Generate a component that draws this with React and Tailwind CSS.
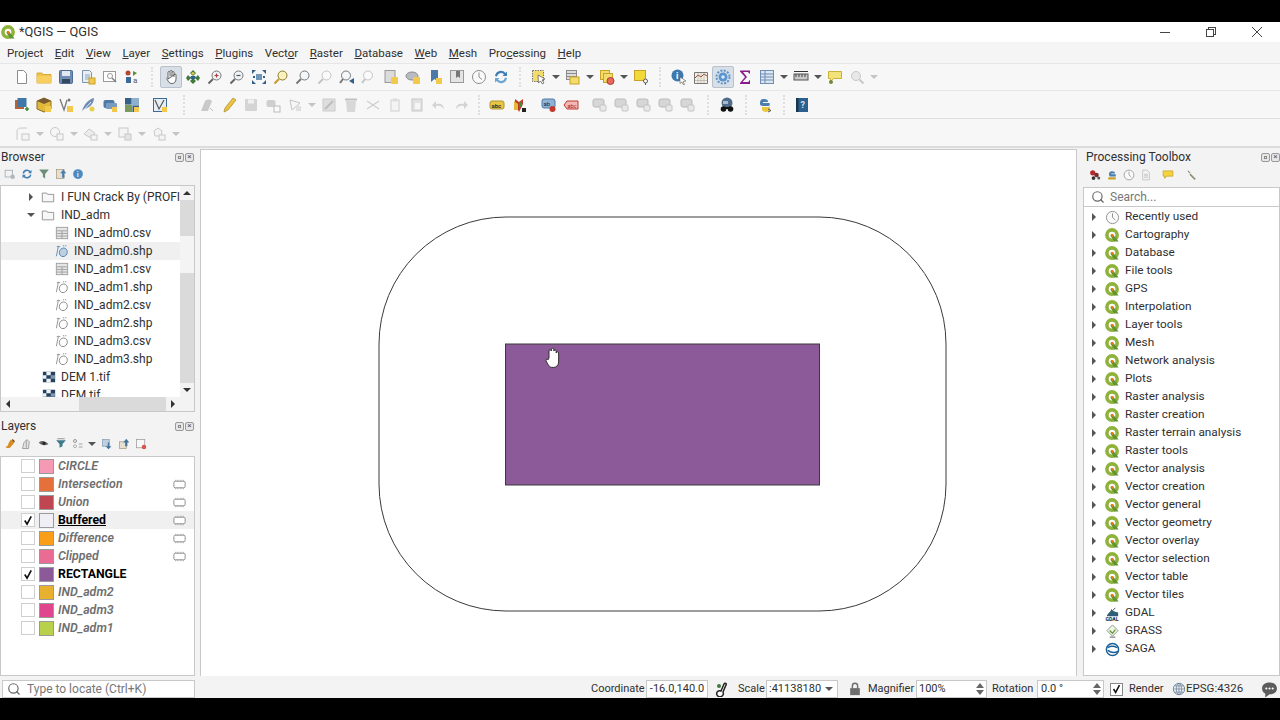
import React from 'react';
import { Search } from 'lucide-react';

const g = { fill: 'none', stroke: '#9a9a9a' };

// small toolbar drawings, all on a 16 unit grid
const shapes = {
  new: <path d="M3.5 1.5h6l3 3v10h-9z" fill="#fff" stroke="#8c8c8c" />,
  open: <><path d="M1 4h5l1 1.5h8V14H1z" fill="#f0c24b" stroke="#d9a93a" /><rect x="1" y="7" width="14" height="7" fill="#f6cf60" /></>,
  save: <><rect x="1.5" y="1.5" width="13" height="13" rx="1" fill="#6f8db5" stroke="#4f6a90" /><rect x="4" y="2" width="8" height="5" fill="#dfe7f0" /><rect x="4" y="10" width="8" height="4" fill="#34495f" /></>,
  saveas: <><path d="M2.5 1.5h7l2 2v10h-9z" fill="#e8eef4" stroke="#7d93ad" /><rect x="5" y="5" width="5" height="6" fill="#b9c9d8" /><rect x="9" y="9" width="6" height="6" fill="#f2c94c" stroke="#c9a227" /></>,
  print: <><rect x="1.5" y="2.5" width="12" height="10" fill="#fff" stroke="#9a9a9a" /><circle cx="8" cy="7" r="2.5" {...g} /><path d="M10 9l4 4" stroke="#7d7d7d" strokeWidth="1.5" /></>,
  style: <><circle cx="4" cy="4" r="2.5" fill="#b5472f" /><path d="M9 2l4 2-4 3z" fill="#5b8e3a" /><rect x="2" y="8" width="5" height="6" fill="#3d6a94" /><text x="9" y="14" fontSize="8" fill="#555">a</text></>,
  hand: <path d="M5 8V3.5a1 1 0 012 0V7m0-4.500a1 1 0 012 0V7m0-3.500a1 1 0 012 0V8m0-2a1 1 0 012 0v4c0 3-2 4.500-4 4.500-3 0-3.500-1.500-5-4.500-.6-1.200.8-2 1.600-1L5 10z" fill="#fff" stroke="#444" strokeWidth=".8" />,
  pan: <><path d="M8 1l3 3-3 3-3-3zM3 6l3 3-3 3-2-3zM13 6l2 3-2 3-3-3zM8 9l3 3-3 3-3-3z" fill="#3f7a3a" /><path d="M8 3l2 1-2 2-2-2z" fill="#e7cf4a" /><path d="M6 7l4 0 1 2-3 2-3-2z" fill="#2f5f88" /></>,
  zoomin: <><circle cx="9.500" cy="6.500" r="4.500" fill="#eef3f8" stroke="#777" /><path d="M6 10l-4.500 4.500" stroke="#666" strokeWidth="2" /><path d="M7.500 6.500h4M9.500 4.500v4" stroke="#b03a3a" strokeWidth="1.200" /></>,
  zoomout: <><circle cx="9.500" cy="6.500" r="4.500" fill="#eef3f8" stroke="#777" /><path d="M6 10l-4.500 4.500" stroke="#666" strokeWidth="2" /><path d="M7.500 6.500h4" stroke="#555" strokeWidth="1.200" /></>,
  full: <><path d="M1 1h4L1 5zM15 1v4l-4-4zM1 15v-4l4 4zM15 15h-4l4-4z" fill="#35608a" /><rect x="5" y="5" width="6" height="6" fill="#6f97ba" /><path d="M2 8h2M12 8h2" stroke="#35608a" strokeWidth="2" /></>,
  zoomsel: <><circle cx="9.500" cy="6.500" r="4.500" fill="#fbf0c0" stroke="#8a7a2e" /><path d="M6 10l-4.500 4.500" stroke="#c79a2a" strokeWidth="2" /></>,
  zoomlayer: <><circle cx="9.500" cy="6.500" r="4.500" fill="#f4f7fa" stroke="#777" /><path d="M6 10l-4.500 4.500" stroke="#777" strokeWidth="2" /></>,
  zoomoff: <><circle cx="9.500" cy="6.500" r="4.500" fill="#fafafa" stroke="#c4c4c4" /><path d="M6 10l-4.500 4.500" stroke="#c4c4c4" strokeWidth="2" /></>,
  zoomlast: <><circle cx="7" cy="6.500" r="4.500" fill="#f4f7fa" stroke="#777" /><path d="M4 10l-3 4" stroke="#777" strokeWidth="2" /><path d="M15 9v6l-5-3z" fill="#35608a" /></>,
  zoomnext: <><circle cx="7" cy="6.500" r="4.500" fill="#fafafa" stroke="#c4c4c4" /><path d="M4 10l-3 4" stroke="#c4c4c4" strokeWidth="2" /></>,
  newmap: <><rect x="2" y="1.500" width="10" height="12" fill="#dbdbdb" stroke="#9a9a9a" /><rect x="8" y="8" width="7" height="7" rx="1" fill="#f2c94c" /></>,
  theme: <><ellipse cx="7" cy="7" rx="6" ry="4" fill="#b8bcc2" stroke="#8a8a8a" /><rect x="8" y="8" width="7" height="7" rx="1" fill="#f2c94c" /></>,
  bookmark: <><path d="M4 1h7v12l-3.500-3L4 13z" fill="#4d79a8" /><rect x="9" y="9" width="6" height="6" fill="#f2c94c" /></>,
  bookmarks: <><rect x="1.500" y="1.500" width="13" height="12" fill="#e4e4e4" stroke="#9a9a9a" /><path d="M7 2h4v7L9 7.500 7 9z" fill="#777" /></>,
  clock: <><circle cx="8" cy="8" r="6.500" fill="#fafafa" stroke="#8d8d8d" /><path d="M8 3.500V8l3 2.500" fill="none" stroke="#8d8d8d" /></>,
  refresh: <><path d="M2 7a6 6 0 0110.500-3L14 2.500V7H9.500l1.500-1.500A4 4 0 004 7.500z" fill="#3f7fb5" /><path d="M14 9A6 6 0 013.500 12L2 13.500V9h4.500L5 10.500A4 4 0 0012 8.500z" fill="#6aa6d4" /></>,
  select: <><rect x="1.500" y="1.500" width="11" height="11" fill="#f2dc6b" stroke="#777" strokeDasharray="1.500 1" /><path d="M7 6l7 4-3 1 2 3-1.500 1-2-3-2 2z" fill="#fff" stroke="#555" strokeWidth=".7" /></>,
  attr: <><rect x="1.500" y="1.500" width="10" height="9" fill="#dcdcdc" stroke="#8c8c8c" /><path d="M2 4.500h9M2 7.500h9" stroke="#8c8c8c" /><rect x="5" y="8" width="9" height="7" fill="#f2dc6b" stroke="#c9a227" /></>,
  deselect: <><rect x="1.500" y="1.500" width="9" height="9" fill="#f2dc6b" stroke="#c9a227" /><rect x="4.500" y="4.500" width="9" height="9" fill="#f2dc6b" stroke="#c9a227" /><circle cx="11.500" cy="12" r="3.500" fill="#e56a5a" stroke="#b03a3a" /></>,
  selloc: <><rect x="1.500" y="1.500" width="11" height="10" fill="#f2d93a" stroke="#c9a227" /><circle cx="12.500" cy="12" r="2" fill="#fff" stroke="#555" /><path d="M12.500 14v2" stroke="#555" /></>,
  identify: <><circle cx="6.500" cy="6.500" r="6" fill="#3f78ad" /><text x="5" y="10" fontSize="9" fontWeight="700" fill="#fff">i</text><path d="M9 8l6 4-3 .5 1.500 3-1 .5-1.500-3-2 1.500z" fill="#fff" stroke="#555" strokeWidth=".6" /></>,
  stats: <><path d="M1.500 3.500h13v11h-13z" fill="#f3eee0" stroke="#777" /><path d="M2 9l3-3 3 2 3-3 3 2" fill="none" stroke="#9c4a3a" /><path d="M2 11.500h12M5 4v10M8 4v10M11 4v10" stroke="#999" strokeWidth=".5" /></>,
  gear: <><circle cx="8" cy="8" r="4.500" fill="#5b95cf" /><circle cx="8" cy="8" r="6.500" fill="none" stroke="#5b95cf" strokeWidth="2" strokeDasharray="2 1.400" /><circle cx="8" cy="8" r="1.800" fill="#dbe7f2" /></>,
  sigma: <path d="M3 1.500h10v3h-1.200l-.6-1.500H6l4 5-4.500 5h6l.8-1.800H13V15H3v-1l5-6-5-5.500z" fill="#8a1c8a" />,
  table: <><rect x="1.500" y="1.500" width="13" height="13" fill="#dbe6f0" stroke="#6f8db5" /><path d="M2 5h12M2 8h12M2 11h12M6 2v12" stroke="#6f8db5" /></>,
  measure: <><rect x="1" y="5" width="14" height="6" fill="#c9c9c9" stroke="#555" /><path d="M3 5v3M6 5v3M9 5v3M12 5v3" stroke="#444" /><path d="M1 2.500h14" stroke="#333" /></>,
  tip: <><path d="M1.500 2.500h13v7h-8l-3 3v-3h-2z" fill="#f3e27a" stroke="#c9b23a" /><circle cx="4" cy="13" r="2" fill="#6f8b3a" /></>,
  findoff: <><circle cx="7" cy="7" r="4.500" fill="#e8e8e8" stroke="#c8c8c8" /><path d="M10.500 10.500l4 4" stroke="#c8c8c8" strokeWidth="2" /></>,
  dsm: <><rect x="1" y="3" width="9" height="9" fill="#b5633a" /><rect x="3.500" y="1" width="9" height="9" fill="#3f78ad" /><path d="M11 12h4M13 10v4" stroke="#3f8f3a" strokeWidth="1.600" /></>,
  gpkg: <><path d="M8 1l7 3v8l-7 3-7-3V4z" fill="#e0b93a" stroke="#8a6d20" /><path d="M1 4l7 3 7-3-7-3z" fill="#7a5a30" /><rect x="9" y="9" width="6" height="6" fill="#f2c94c" /></>,
  vnew: <><path d="M2 2l4 11 3-10" fill="none" stroke="#777" strokeWidth="1.300" /><circle cx="11" cy="3" r="1.500" fill="#777" /><rect x="9" y="9" width="6" height="6" fill="#f2c94c" /></>,
  feather: <><path d="M2 14C4 7 9 2 14 1c0 5-4 10-10 11z" fill="#6f8db5" /><path d="M2 15L11 5" stroke="#e8eef4" /><circle cx="12" cy="12" r="2.500" fill="#e7cf4a" /></>,
  vrt: <><rect x="1.500" y="3" width="11" height="8" rx="2" fill="#4f7aa8" /><rect x="4" y="6" width="11" height="6" rx="1" fill="#7c9cbf" /><rect x="10" y="10" width="5" height="5" fill="#f2c94c" /></>,
  raster: <><rect x="1" y="1" width="14" height="14" fill="#35608a" /><path d="M1 8h14M8 1v14" stroke="#cfd8e0" /><path d="M8 1h7v7H8z" fill="#8db0cc" /><path d="M1 8h7v7H1z" fill="#7a9a5a" /><rect x="10" y="10" width="5" height="5" fill="#f2c94c" /></>,
  mesh: <><rect x="1.500" y="1.500" width="13" height="13" fill="#e7eef5" stroke="#3f6a94" /><path d="M3 3l4 9 5-9" fill="none" stroke="#555" strokeWidth="1.200" /><rect x="10" y="10" width="5" height="5" fill="#f2c94c" /></>,
  editoff: <><path d="M2 14L6 4c2-2 5-2 7 0L9 14z" fill="#c9c9c9" /><path d="M11 11l3 3" stroke="#bbb" /></>,
  pencil: <><path d="M3 15l1-4 8-10 3 2-8 10z" fill="#ecc23e" stroke="#a88a2a" strokeWidth=".7" /></>,
  saveoff: <><rect x="2" y="2" width="12" height="12" rx="1" fill="#d4d4d4" /><rect x="5" y="2.500" width="6" height="4" fill="#f0f0f0" /></>,
  addoff: <><rect x="1.500" y="3" width="9" height="7" rx="2" fill="#cfcfcf" /><rect x="9" y="9" width="6" height="6" fill="#fafafa" stroke="#bbb" /></>,
  nodeoff: <><path d="M3 3l10 3-8 7z" fill="none" stroke="#c4c4c4" /><rect x="9" y="9" width="5" height="5" fill="#e0e0e0" /></>,
  modoff: <><rect x="2" y="2" width="12" height="12" fill="#dedede" stroke="#ccc" /><path d="M4 12L12 4" stroke="#bdbdbd" strokeWidth="2" /></>,
  trashoff: <><path d="M3 4h10l-1 11H4z" fill="#d8d8d8" /><path d="M2 2.500h12" stroke="#c0c0c0" strokeWidth="2" /></>,
  cutoff: <path d="M2 4l12 8M2 12l12-8" fill="none" stroke="#cfcfcf" strokeWidth="1.400" />,
  copyoff: <><rect x="4" y="3" width="8" height="11" fill="#f4f4f4" stroke="#cfcfcf" /><rect x="6" y="1.500" width="4" height="3" fill="#dcdcdc" /></>,
  pasteoff: <><rect x="3" y="2" width="10" height="12" fill="#e2e2e2" stroke="#c8c8c8" /><rect x="6" y="6" width="5" height="6" fill="#f6f6f6" /></>,
  undooff: <path d="M13 12c0-5-4-6-8-5V4L1 8l4 4V9c3-1 6 0 8 3z" fill="#d4d4d4" />,
  redooff: <path d="M3 12c0-5 4-6 8-5V4l4 4-4 4V9c-3-1-6 0-8 3z" fill="#d4d4d4" />,
  abc: <><rect x="1" y="4" width="14" height="8" rx="2" fill="#e8c547" stroke="#b3942a" /><text x="2.500" y="10.500" fontSize="6" fontWeight="700" fill="#333">abc</text></>,
  diagram: <><path d="M4 2l4 3 4-3v5l-4 8-4-8z" fill="#c0392b" /><path d="M3 4l4 3v6H3z" fill="#e3b93a" /><path d="M8 6l3-2v6H8z" fill="#3f8f3a" /><rect x="11" y="11" width="4" height="4" fill="#222" /></>,
  ablabel: <><rect x="1" y="2" width="13" height="9" rx="2" fill="#8fb3d4" stroke="#4f7aa8" /><text x="2.500" y="9" fontSize="6" fill="#223">ab</text><circle cx="11.500" cy="12" r="3" fill="#c0392b" /></>,
  abcred: <><path d="M1 8l3-4h11v8H4z" fill="#f2b8b8" stroke="#c0392b" /><text x="4.500" y="10.500" fontSize="5.500" fill="#a02020">abc</text></>,
  lbloff: <><rect x="1" y="2" width="11" height="8" rx="2" fill="#d6d6d6" stroke="#bbb" /><rect x="8" y="8" width="6" height="6" rx="1" fill="#e8e8e8" stroke="#c4c4c4" /></>,
  binoc: <><circle cx="8" cy="6" r="5.500" fill="#4f6d8a" /><path d="M4 4h5v3H4z" fill="#a9b9c6" /><circle cx="4.500" cy="12" r="2.800" fill="#111" /><circle cx="11.500" cy="12" r="2.800" fill="#111" /><rect x="6" y="10" width="4" height="2" fill="#111" /></>,
  python: <><path d="M3 7c0-4 1-5 4-5s4 1 4 3H6v1h6c1 0 1 2 0 3H6c-2 0-3-1-3-2z" fill="#4a7fb0" /><path d="M5 10h6c1 0 2-.5 2-1v2c0 3-2 4-4 4s-4-1-4-3z" fill="#edc73d" /><path d="M11 12l3 1.500-3 1.500" fill="none" stroke="#555" /></>,
  help: <><rect x="2" y="1" width="12" height="14" fill="#2b5f8c" /><rect x="2" y="1" width="2.500" height="14" fill="#18364f" /><text x="6.500" y="11" fontSize="9" fontWeight="700" fill="#cfe0ee">?</text></>,
  t3a: <><path d="M2 14V5c0-2 2-3 4-3h6" fill="none" stroke="#c8c8c8" /><rect x="7" y="8" width="7" height="6" fill="#f4f4f4" stroke="#c8c8c8" /></>,
  t3b: <><circle cx="6" cy="6" r="4.500" fill="#f6f6f6" stroke="#c8c8c8" /><rect x="8" y="8" width="6" height="6" fill="#f4f4f4" stroke="#c8c8c8" /></>,
  t3c: <><path d="M1 8l5-5 6 4-4 5z" fill="#ececec" stroke="#c8c8c8" /><rect x="8" y="9" width="6" height="5" fill="#f4f4f4" stroke="#c8c8c8" /></>,
  t3d: <><rect x="2" y="2" width="9" height="9" fill="#f4f4f4" stroke="#c8c8c8" /><rect x="8" y="8" width="6" height="6" fill="#e4e4e4" stroke="#c8c8c8" /></>,
  t3e: <><path d="M3 5l4-3 4 3-1 5H4z" fill="#f4f4f4" stroke="#c8c8c8" /><rect x="8" y="9" width="6" height="5" fill="#f4f4f4" stroke="#c8c8c8" /></>,
  enable: <><rect x="1.500" y="3" width="10" height="9" fill="#f2f2f2" stroke="#9aa5b0" /><circle cx="11.500" cy="11.500" r="3" fill="#b3b7bb" /></>,
  refreshs: <path d="M2 7a6 6 0 0110.500-3L14 2.500V7H9.500l1.500-1.500A4 4 0 004 7.500zM14 9A6 6 0 013.500 12L2 13.500V9h4.500L5 10.500A4 4 0 0012 8.500z" fill="#3f7fb5" />,
  filter: <path d="M1.500 2h13L9.500 8v6l-3-2V8z" fill="#6d8f7a" />,
  upfile: <><rect x="2" y="2" width="10" height="12" fill="#e7dfcf" stroke="#a89a80" /><path d="M11 2l4 5h-2.500v6h-3V7H7z" fill="#4a7fb0" /></>,
  info: <><circle cx="8" cy="8" r="6.500" fill="#4a8bc2" /><text x="6.400" y="12" fontSize="10" fontWeight="700" fill="#dce9f4">i</text></>,
  brush: <><path d="M9 2l5 4-6 7c-3 1-5 0-6-1 3-1 4-3 4-5z" fill="#d98c26" /><path d="M11 2l3 3" stroke="#7a4a10" strokeWidth="2" /></>,
  manage: <><path d="M2 14l2-8 4-4 3 3-1 9z" fill="#e4e4e4" stroke="#8a8a8a" /><path d="M7 3v10" stroke="#8a8a8a" /></>,
  eye: <><path d="M1 6c3-3 8-3 13 2-5 3-10 2-13-2z" fill="#666" /><circle cx="8" cy="7" r="2" fill="#222" /></>,
  filterl: <><path d="M1.500 3h13L10 8v3l-4 2V8z" fill="#3f7a8a" /><path d="M3 1h10" stroke="#777" /></>,
  expr: <><circle cx="4" cy="4" r="2" fill="none" stroke="#777" /><circle cx="4" cy="11" r="2" fill="none" stroke="#999" /><path d="M9 8h5M9 12h5" stroke="#888" /></>,
  down: <><rect x="2" y="2" width="9" height="9" fill="#bcd0e2" stroke="#8a9fb2" /><path d="M9 6v5h-3l4 4 4-4h-3V6z" fill="#46739c" /></>,
  up: <><rect x="2" y="5" width="9" height="9" fill="#e7dfcf" stroke="#a89a80" /><path d="M11 1l4 5h-2.500v5h-3V6H7z" fill="#46739c" /></>,
  remove: <><rect x="2" y="2" width="11" height="11" fill="#f8f8f8" stroke="#9a9a9a" /><circle cx="12" cy="12" r="3" fill="#d9534f" /></>,
  models: <><circle cx="5" cy="5" r="3.500" fill="#b5282e" /><circle cx="10" cy="8" r="3" fill="#7a2a2a" /><circle cx="6" cy="12" r="2.500" fill="#333" /><circle cx="13" cy="12" r="2" fill="#555" /></>,
  script: <><path d="M4 8c0-4 1-5 4-5s4 1 4 3H7v1h6v3H5z" fill="#4a7fb0" /><path d="M3 11h10v3H3z" fill="#c9a227" /></>,
  doc: <><path d="M3.500 1.500h6l3 3v10h-9z" fill="#f2f2f2" stroke="#bcbcbc" /><path d="M5.500 7h5M5.500 9h5M5.500 11h5" stroke="#bcbcbc" /></>,
  tag: <><path d="M1.500 2.500h13v7h-8l-3 3v-3h-2z" fill="#f3d33e" stroke="#c9a227" /></>,
  wrench: <path d="M3 2l3 3-1 1-3-3zM6 6l7 7-1.500 1.500-7-7z" fill="#8a8f76" />,
  csv: <><rect x="1.500" y="1.500" width="13" height="13" fill="#e6e6e6" stroke="#9a9a9a" /><path d="M2 5.500h12M2 8.500h12M2 11.500h12M8 5.500v9" stroke="#9a9a9a" /></>,
  shp: <><path d="M4 2L1.500 14" stroke="#8a8a8a" fill="none" /><path d="M2 3h4M9 2h5" stroke="#8a8a8a" strokeDasharray="1.500 1" /><ellipse cx="9.500" cy="9.500" rx="4.500" ry="5" transform="rotate(25 9.500 9.500)" fill="none" stroke="#8a8a8a" /></>,
  shpsel: <><path d="M4 2L1.500 14" stroke="#5a86b0" fill="none" /><path d="M2 3h4M9 2h5" stroke="#5a86b0" strokeDasharray="1.500 1" /><ellipse cx="9.500" cy="9.500" rx="4.500" ry="5" transform="rotate(25 9.500 9.500)" fill="#bcd0e2" stroke="#5a86b0" /></>,
  tif: <><rect x="1" y="2" width="14" height="12" fill="#24415f" /><rect x="5" y="2" width="5" height="4" fill="#eef2f6" /><rect x="1" y="6" width="4" height="4" fill="#eef2f6" /><rect x="10" y="6" width="5" height="4" fill="#7f97ad" /><rect x="5" y="10" width="5" height="4" fill="#eef2f6" /></>,
  folder: <path d="M1.500 3.500h5l1 1.500h7v8.500h-13z" fill="#f7f7f7" stroke="#8c8c8c" />,
  qgis: <><circle cx="7.500" cy="7.500" r="5.500" fill="none" stroke="#8fb23a" strokeWidth="3.800" /><path d="M5.500 8l3-1 6 7.500h-4.500z" fill="#5f9430" /><path d="M6 6.500l2.500 0 1 2-2 1z" fill="#ee7913" /></>,
  gdal: <><path d="M2 11c1-4 4-4 5-8 1 3 4 3 7 4v4z" fill="#2f5f78" /><path d="M8 5l3-3" stroke="#444" /><text x="0.500" y="15.500" fontSize="5.500" fontWeight="700" fill="#123">GDAL</text></>,
  grass: <><path d="M8 1l6 6-6 6-6-6z" fill="#eef4e8" stroke="#8a9a8a" /><path d="M5 7l3 3 3-4" fill="none" stroke="#5f9430" strokeWidth="1.400" /><path d="M5 14h6" stroke="#555" /></>,
  saga: <><circle cx="8" cy="8" r="6.500" fill="none" stroke="#1a5f96" strokeWidth="1.600" /><path d="M3 6c3-2 6-2 10 0M3 9c4 3 7 3 11 1" fill="none" stroke="#1a5f96" strokeWidth="1.600" /></>,
  indicator: <><rect x="2" y="4.500" width="12" height="7" rx="1.500" fill="#fff" stroke="#8a8a8a" /><path d="M4 3v1.500M6.500 3v1.500M9.500 3v1.500M12 3v1.500M4 11.500V13M6.500 11.500V13M9.500 11.500V13M12 11.500V13" stroke="#a0a0a0" /></>,
  crs: <><circle cx="8" cy="8" r="6.500" fill="#e8eef4" stroke="#6a7f92" /><path d="M1.500 8h13M8 1.500v13M3 4.500h10M3 11.500h10" stroke="#6a7f92" strokeWidth=".8" /><ellipse cx="8" cy="8" rx="3" ry="6.500" fill="none" stroke="#6a7f92" strokeWidth=".8" /></>,
  toggle: <><path d="M4 14a3 3 0 014-4l3-7c1-2 3 0 2 1l-3 7a3 3 0 11-6 3z" fill="#fff" stroke="#222" strokeWidth="1.500" /><circle cx="6" cy="5" r="2" fill="#3f7a3a" /></>,
  lock: <><rect x="2.500" y="7" width="11" height="8" fill="#6d6d6d" /><path d="M5 7V4.500a3 3 0 016 0V7" fill="none" stroke="#6d6d6d" strokeWidth="1.600" /></>,
  msg: <><path d="M8 1.500c4.500 0 7 2.500 7 5.500s-2.500 5.500-7 5.500l-4 3v-3.800C2 11 1 9 1 7c0-3 2.500-5.500 7-5.500z" fill="#5c5c5c" /><circle cx="5" cy="7" r="1" fill="#fff" /><circle cx="8" cy="7" r="1" fill="#fff" /><circle cx="11" cy="7" r="1" fill="#fff" /></>,
};

function Ico({ n, s = 16 }) {
  return (
    <svg width={s} height={s} viewBox="0 0 16 16" className="shrink-0">
      {shapes[n]}
    </svg>
  );
}

const Caret = ({ off }) => (
  <div className="w-[12px] flex justify-center">
    <div className={`border-x-[4px] border-x-transparent border-t-[4px] ${off ? 'border-t-[#c4c4c4]' : 'border-t-[#555]'}`} />
  </div>
);

const Tool = ({ n, active, drop, off }) => (
  <>
    <div className={`w-[22px] h-[22px] flex items-center justify-center rounded-[2px] ${active ? 'bg-[#d9dfe6] border border-[#b9c2cc]' : ''}`}>
      <Ico n={n} />
    </div>
    {drop && <Caret off={off} />}
  </>
);

const Group = ({ items }) => (
  <div className="flex items-center">
    {items.map((it, i) => (
      <Tool key={i} n={it[0]} drop={it.includes('d')} active={it.includes('a')} off={it.includes('o')} />
    ))}
  </div>
);

const Grip = ({ className }) => (
  <div className={`flex justify-center ${className}`}>
    <div className="h-[20px] border-l-2 border-dotted border-[#dedede]" />
  </div>
);

const PanelIcon = ({ n, s = 12 }) => (
  <div className="w-[17px] flex justify-center"><Ico n={n} s={s} /></div>
);

const menus = [
  ['', 'Project', ''], ['E', 'dit', ''], ['V', 'iew', ''], ['L', 'ayer', ''], ['S', 'ettings', ''], ['P', 'lugins', ''],
  ['Vect', 'o', 'r', true], ['R', 'aster', ''], ['D', 'atabase', ''], ['W', 'eb', ''], ['M', 'esh', ''],
  ['Pro', 'c', 'essing', true], ['H', 'elp', ''],
];

const browserRows = [
  { icon: 'folder', text: 'I FUN Crack By (PROFIT', arrow: 'r', pad: 'pl-[27px]' },
  { icon: 'folder', text: 'IND_adm', arrow: 'd', pad: 'pl-[27px]' },
  { icon: 'csv', text: 'IND_adm0.csv', pad: 'pl-[54px]' },
  { icon: 'shpsel', text: 'IND_adm0.shp', pad: 'pl-[54px]', hi: true },
  { icon: 'csv', text: 'IND_adm1.csv', pad: 'pl-[54px]' },
  { icon: 'shp', text: 'IND_adm1.shp', pad: 'pl-[54px]' },
  { icon: 'shp', text: 'IND_adm2.csv', pad: 'pl-[54px]' },
  { icon: 'shp', text: 'IND_adm2.shp', pad: 'pl-[54px]' },
  { icon: 'shp', text: 'IND_adm3.csv', pad: 'pl-[54px]' },
  { icon: 'shp', text: 'IND_adm3.shp', pad: 'pl-[54px]' },
  { icon: 'tif', text: 'DEM 1.tif', pad: 'pl-[41px]' },
  { icon: 'tif', text: 'DEM.tif', pad: 'pl-[41px]' },
];

const layers = [
  { name: 'CIRCLE', color: 'bg-[#f49ab4]' },
  { name: 'Intersection', color: 'bg-[#e6703c]', mem: true },
  { name: 'Union', color: 'bg-[#bf4650]', mem: true },
  { name: 'Buffered', color: 'bg-[#f0eff5]', mem: true, on: true, under: true },
  { name: 'Difference', color: 'bg-[#fb9e17]', mem: true },
  { name: 'Clipped', color: 'bg-[#ea6b93]', mem: true },
  { name: 'RECTANGLE', color: 'bg-[#8d5a99]', on: true },
  { name: 'IND_adm2', color: 'bg-[#e8b02f]' },
  { name: 'IND_adm3', color: 'bg-[#e0468e]' },
  { name: 'IND_adm1', color: 'bg-[#b9d14a]' },
];

const providers = [
  ['clock', 'Recently used'], ['qgis', 'Cartography'], ['qgis', 'Database'], ['qgis', 'File tools'], ['qgis', 'GPS'],
  ['qgis', 'Interpolation'], ['qgis', 'Layer tools'], ['qgis', 'Mesh'], ['qgis', 'Network analysis'], ['qgis', 'Plots'],
  ['qgis', 'Raster analysis'], ['qgis', 'Raster creation'], ['qgis', 'Raster terrain analysis'], ['qgis', 'Raster tools'],
  ['qgis', 'Vector analysis'], ['qgis', 'Vector creation'], ['qgis', 'Vector general'], ['qgis', 'Vector geometry'],
  ['qgis', 'Vector overlay'], ['qgis', 'Vector selection'], ['qgis', 'Vector table'], ['qgis', 'Vector tiles'],
  ['gdal', 'GDAL'], ['grass', 'GRASS'], ['saga', 'SAGA'],
];

const ArrowR = () => <div className="border-y-[4px] border-y-transparent border-l-[4px] border-l-[#555]" />;
const ArrowD = () => <div className="border-x-[4px] border-x-transparent border-t-[4px] border-t-[#555]" />;

const DockBtns = () => (
  <div className="flex gap-[1px]">
    <div className="w-[9px] h-[9px] border border-[#999] rounded-[2px] bg-[#e6e6e6] flex items-center justify-center">
      <div className="w-[3px] h-[3px] border border-[#888]" />
    </div>
    <div className="w-[9px] h-[9px] border border-[#999] rounded-[2px] bg-[#e6e6e6] flex items-center justify-center text-[8px] leading-none text-[#555]">×</div>
  </div>
);

const ScrollArrow = ({ dir }) => {
  const cls = {
    up: 'border-x-[4px] border-x-transparent border-b-[4px] border-b-[#333]',
    down: 'border-x-[4px] border-x-transparent border-t-[4px] border-t-[#333]',
    left: 'border-y-[4px] border-y-transparent border-r-[4px] border-r-[#333]',
    right: 'border-y-[4px] border-y-transparent border-l-[4px] border-l-[#333]',
  }[dir];
  return <div className="w-[14px] h-[14px] flex items-center justify-center bg-[#f3f3f3]"><div className={cls} /></div>;
};

const Spin = () => (
  <div className="flex flex-col items-center gap-[2px] w-[12px]">
    <div className="border-x-[4px] border-x-transparent border-b-[5px] border-b-[#666]" />
    <div className="border-x-[4px] border-x-transparent border-t-[5px] border-t-[#666]" />
  </div>
);

const Check = ({ className }) => (
  <svg viewBox="0 0 13 13" className={className}>
    <path d="M3 6.500l2.500 4L10 2" fill="none" stroke="#111" strokeWidth="1.800" />
  </svg>
);

export default function App() {
  return (
    <div className="w-[1280px] h-[720px] bg-black flex flex-col overflow-hidden text-[12px] text-[#303030] font-['Roboto','Noto_Sans',sans-serif]">
      <div className="h-[22px] shrink-0" />
      <div className="h-[676px] shrink-0 bg-[#f3f3f3] flex flex-col">
        {/* title bar */}
        <div className="h-[20px] shrink-0 bg-white flex items-center">
          <div className="ml-[1px] mr-[3px]"><Ico n="qgis" s={15} /></div>
          <span className="text-[12.8px]">*QGIS — QGIS</span>
          <div className="ml-auto flex items-center">
            <div className="w-[46px] flex justify-center"><div className="w-[10px] h-px bg-[#444]" /></div>
            <div className="w-[46px] flex justify-center">
              <div className="relative w-[10px] h-[10px]">
                <div className="absolute left-[2px] top-0 w-[8px] h-[8px] border border-[#444]" />
                <div className="absolute left-0 top-[2px] w-[8px] h-[8px] border border-[#444] bg-white" />
              </div>
            </div>
            <div className="w-[46px] flex justify-center">
              <svg width="12" height="12" viewBox="0 0 12 12"><path d="M1 1l10 10M11 1L1 11" stroke="#444" /></svg>
            </div>
          </div>
        </div>

        {/* menu bar */}
        <div className="h-[21px] shrink-0 flex items-center gap-[11.6px] pl-[7px] pt-[2px] bg-[#f5f5f5] text-[11.5px]">
          {menus.map((m, i) => (
            <span key={i}>
              {m[3] ? <>{m[0]}<u>{m[1]}</u>{m[2]}</> : <>{m[0] && <u>{m[0]}</u>}{m[1]}</>}
            </span>
          ))}
        </div>

        {/* toolbars */}
        <div className="h-[28px] shrink-0 flex items-center pl-[11px] bg-[#f7f7f7] border-y border-[#e6e6e6]">
          <Group items={[['new'], ['open'], ['save'], ['saveas'], ['print'], ['style']]} />
          <Grip className="w-[17px]" />
          <Group items={[['hand', 'a'], ['pan'], ['zoomin'], ['zoomout'], ['full'], ['zoomsel'], ['zoomlayer'], ['zoomoff'], ['zoomlast'], ['zoomnext'], ['newmap'], ['theme'], ['bookmark'], ['bookmarks'], ['clock'], ['refresh']]} />
          <Grip className="w-[16px]" />
          <Group items={[['select', 'd'], ['attr', 'd'], ['deselect', 'd'], ['selloc']]} />
          <Grip className="w-[16px]" />
          <Group items={[['identify'], ['stats'], ['gear', 'a'], ['sigma'], ['table', 'd'], ['measure', 'd'], ['tip'], ['findoff', 'd', 'o']]} />
        </div>
        <div className="h-[28px] shrink-0 flex items-center pl-[11px] bg-[#f7f7f7] border-b border-[#e0e0e0]">
          <Group items={[['dsm'], ['gpkg'], ['vnew'], ['feather'], ['vrt'], ['raster']]} />
          <div className="w-[6px]" />
          <Group items={[['mesh']]} />
          <Grip className="w-[25px]" />
          <Group items={[['editoff'], ['pencil'], ['saveoff'], ['addoff'], ['nodeoff', 'd', 'o'], ['modoff'], ['trashoff'], ['cutoff'], ['copyoff'], ['pasteoff'], ['undooff'], ['redooff']]} />
          <Grip className="w-[14px]" />
          <Group items={[['abc'], ['diagram']]} />
          <div className="w-[8px]" />
          <Group items={[['ablabel'], ['abcred']]} />
          <div className="w-[7px]" />
          <Group items={[['lbloff'], ['lbloff'], ['lbloff'], ['lbloff'], ['lbloff']]} />
          <Grip className="w-[17px]" />
          <Group items={[['binoc']]} />
          <Grip className="w-[16px]" />
          <Group items={[['python']]} />
          <Grip className="w-[15px]" />
          <Group items={[['help']]} />
        </div>
        <div className="h-[29px] shrink-0 flex items-center pl-[12px] pt-[2px] bg-[#f7f7f7] border-b-2 border-[#dcdcdc]">
          <Group items={[['t3a', 'd', 'o'], ['t3b', 'd', 'o'], ['t3c', 'd', 'o'], ['t3d', 'd', 'o'], ['t3e', 'd', 'o']]} />
        </div>

        {/* main area */}
        <div className="flex-1 min-h-0 flex">
          {/* left docks */}
          <div className="w-[195px] shrink-0 flex flex-col">
            <div className="h-[18px] shrink-0 flex items-center justify-between px-[1px]">
              <span>Browser</span>
              <DockBtns />
            </div>
            <div className="h-[19px] shrink-0 flex items-center pl-[1px] pb-[3px]">
              <PanelIcon n="enable" />
              <PanelIcon n="refreshs" />
              <PanelIcon n="filter" />
              <PanelIcon n="upfile" />
              <PanelIcon n="info" />
            </div>
            <div className="h-[227px] shrink-0 border border-[#c8c8c8] bg-white flex flex-col">
              <div className="flex-1 min-h-0 flex">
                <div className="flex-1 overflow-hidden pt-[2px]">
                  {browserRows.map((r, i) => (
                    <div key={i} className={`relative h-[18px] flex items-center whitespace-nowrap ${r.pad} ${r.hi ? 'bg-[#f0f0f0]' : ''}`}>
                      {r.arrow && <div className="absolute left-[26px] top-[5px] w-[8px] h-[8px] flex items-center justify-center">{r.arrow === 'r' ? <ArrowR /> : <ArrowD />}</div>}
                      <div className={r.arrow ? 'ml-[13px] mr-[6px]' : 'mr-[5px]'}><Ico n={r.icon} s={14} /></div>
                      <span>{r.text}</span>
                    </div>
                  ))}
                </div>
                <div className="w-[14px] flex flex-col bg-[#dadada]">
                  <ScrollArrow dir="up" />
                  <div className="h-[36px]" />
                  <div className="h-[37px] bg-[#f4f4f4]" />
                  <div className="flex-1" />
                  <ScrollArrow dir="down" />
                </div>
              </div>
              <div className="h-[14px] shrink-0 flex bg-[#f3f3f3]">
                <ScrollArrow dir="left" />
                <div className="w-[64px]" />
                <div className="w-[87px] bg-[#dadada]" />
                <ScrollArrow dir="right" />
              </div>
            </div>
            <div className="h-[5px] shrink-0" />
            <div className="h-[18px] shrink-0 flex items-center justify-between px-[1px]">
              <span>Layers</span>
              <DockBtns />
            </div>
            <div className="h-[21px] shrink-0 flex items-center pl-[1px] pb-[4px]">
              <PanelIcon n="brush" />
              <PanelIcon n="manage" />
              <PanelIcon n="eye" />
              <PanelIcon n="filterl" />
              <PanelIcon n="expr" />
              <Caret />
              <PanelIcon n="down" />
              <PanelIcon n="up" />
              <PanelIcon n="remove" />
            </div>
            <div className="flex-1 min-h-0 border border-[#c8c8c8] bg-white">
              {layers.map((l) => (
                <div key={l.name} className={`h-[18px] flex items-center pl-[20px] ${l.under ? 'bg-[#f0f0f0]' : ''}`}>
                  <div className="w-[14px] h-[14px] border border-[#cfcfcf] bg-white flex items-center justify-center shrink-0">
                    {l.on && <Check className="w-[13px] h-[13px]" />}
                  </div>
                  <div className={`ml-[4px] w-[15px] h-[15px] border border-[#9a9a9a] shrink-0 ${l.color}`} />
                  <span className={`ml-[4px] ${l.on ? 'font-bold text-black text-[12.3px]' : 'font-semibold italic text-[#6f6f6f] text-[12.4px]'} ${l.under ? 'underline' : ''}`}>{l.name}</span>
                  {l.mem && <div className="ml-auto mr-[7px]"><Ico n="indicator" s={15} /></div>}
                </div>
              ))}
            </div>
          </div>

          {/* map canvas */}
          <div className="flex-1 min-w-0 ml-[5px] mr-[6px] mt-[1px] border border-[#c9c9c9] border-b-0 bg-white relative">
            <svg className="block w-full h-full" viewBox="201 150 875 526">
              <rect x="379" y="217" width="567" height="394" rx="127" ry="127" fill="#fff" stroke="#3a3a3a" strokeWidth="1" />
              <rect x="505.500" y="344" width="314" height="141" fill="#8d5a99" stroke="#3a3a3a" strokeWidth="1" />
            </svg>
            <svg className="absolute left-[343px] top-[197px]" width="18" height="22" viewBox="0 0 18 22">
              <path d="M5 11V4a1.200 1.200 0 012.400 0V2.500a1.200 1.200 0 012.400 0V4a1.200 1.200 0 012.400 0v2a1.200 1.200 0 012.400 0v9c0 3.500-2.500 5.500-5.500 5.500-4 0-4.500-2-7-6.500-.8-1.500 1-2.500 2-1.200z" fill="#fff" stroke="#222" strokeWidth=".9" />
            </svg>
          </div>

          {/* processing toolbox */}
          <div className="w-[197px] shrink-0 flex flex-col">
            <div className="h-[18px] shrink-0 flex items-center justify-between pl-[3px]">
              <span>Processing Toolbox</span>
              <DockBtns />
            </div>
            <div className="h-[21px] shrink-0 flex items-center pl-[3px] pb-[4px]">
              <PanelIcon n="models" />
              <PanelIcon n="script" />
              <PanelIcon n="clock" />
              <PanelIcon n="doc" />
              <div className="w-[5px]" />
              <PanelIcon n="tag" />
              <div className="w-[7px]" />
              <PanelIcon n="wrench" />
            </div>
            <div className="h-[20px] shrink-0 border border-[#c8c8c8] bg-white flex items-center pl-[7px] gap-[5px] text-[#777]">
              <Search size={14} className="text-[#666]" />
              <span>Search...</span>
            </div>
            <div className="flex-1 min-h-0 border-x border-b border-[#c8c8c8] bg-white pt-[1px] text-[11.8px]">
              {providers.map(([ic, label]) => (
                <div key={label} className="h-[18px] flex items-center pl-[8px]">
                  <ArrowR />
                  <div className="ml-[9px] mr-[5px]"><Ico n={ic} s={15} /></div>
                  <span>{label}</span>
                </div>
              ))}
            </div>
          </div>
        </div>

        {/* status bar */}
        <div className="h-[22px] shrink-0 flex items-center pt-[4px] bg-[#f3f3f3] text-[11px]">
          <div className="w-[193px] ml-[2px] h-[18px] border border-[#c8c8c8] bg-white flex items-center pl-[4px] gap-[6px] text-[#777] text-[12px]">
            <Search size={14} className="text-[#666]" />
            <span>Type to locate (Ctrl+K)</span>
          </div>
          <span className="ml-[396px] w-[52px]">Coordinate</span>
          <div className="ml-[3px] w-[62px] h-[18px] border border-[#c8c8c8] bg-white flex items-center justify-center">-16.0,140.0</div>
          <div className="ml-[5px] w-[16px]"><Ico n="toggle" s={16} /></div>
          <span className="ml-[9px] w-[26px]">Scale</span>
          <div className="ml-[2px] w-[72px] h-[18px] border border-[#c8c8c8] bg-white flex items-center pl-[2px] justify-between pr-[4px]">
            <span>:41138180</span><ArrowD />
          </div>
          <div className="ml-[10px] w-[14px]"><Ico n="lock" s={14} /></div>
          <span className="ml-[6px] w-[44px]">Magnifier</span>
          <div className="ml-[4px] w-[71px] h-[18px] border border-[#c8c8c8] bg-white flex items-center pl-[2px] justify-between">
            <span>100%</span><Spin />
          </div>
          <span className="ml-[5px] w-[40px]">Rotation</span>
          <div className="ml-[5px] w-[67px] h-[18px] border border-[#c8c8c8] bg-white flex items-center pl-[3px] justify-between">
            <span>0.0 °</span><Spin />
          </div>
          <div className="ml-[6px] w-[13px] h-[13px] border border-[#888] bg-white flex items-center justify-center">
            <Check className="w-[12px] h-[12px]" />
          </div>
          <span className="ml-[6px] w-[34px]">Render</span>
          <div className="ml-[9px] w-[14px]"><Ico n="crs" s={14} /></div>
          <span className="w-[58px] text-[11.5px]">EPSG:4326</span>
          <div className="ml-[17px]"><Ico n="msg" s={17} /></div>
        </div>
      </div>
      <div className="flex-1" />
    </div>
  );
}
